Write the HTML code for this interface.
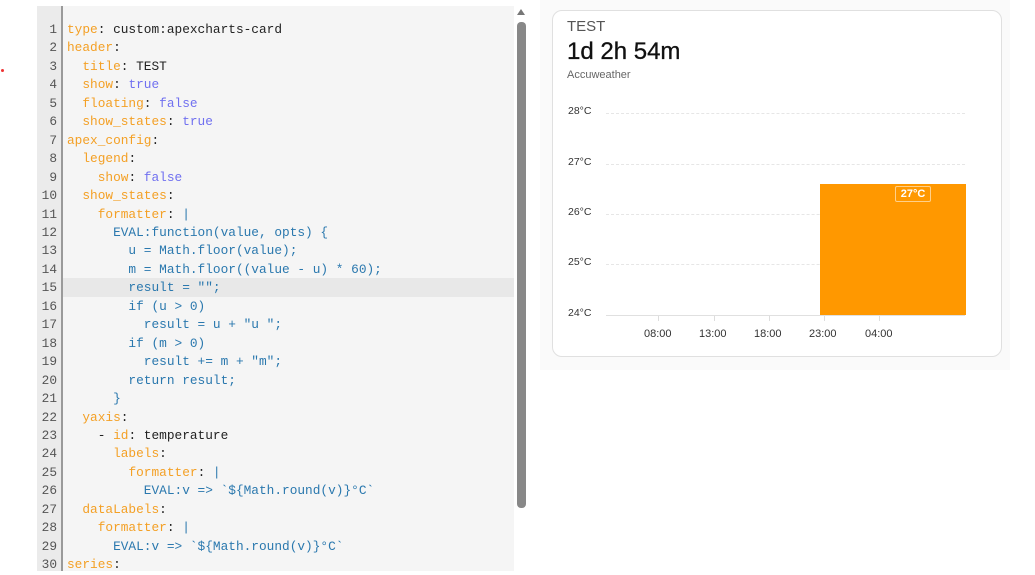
<!DOCTYPE html><html><head><style>
body{margin:0;width:1035px;height:571px;background:#fff;position:relative;overflow:hidden;font-family:"Liberation Sans",sans-serif}
.ed{position:absolute;left:37px;top:6px;width:477px;height:565px;background:#f5f5f5}
.gut{position:absolute;left:37px;top:6px;width:24px;height:565px;background:#ebebeb;border-right:2px solid #9a9a9a}
.hl{position:absolute;left:63px;top:278px;width:451px;height:19px;background:#e8e8e8}
.code{position:absolute;left:37px;top:21px;font-family:"Liberation Mono",monospace;font-size:12.8px;line-height:18.45px;white-space:pre;color:#222}
.ln{display:inline-block;width:20px;text-align:right;color:#555;margin-right:10px}
.k{color:#f4a025}.b{color:#7070f0}.s{color:#2a78ae}
.sb{position:absolute;left:517px;top:22px;width:9px;height:486px;background:#888;border-radius:4px}
.arr{position:absolute;left:517px;top:9px;width:0;height:0;border-left:4px solid transparent;border-right:4px solid transparent;border-bottom:6px solid #777}
.rbg{position:absolute;left:540px;top:0;width:470px;height:370px;background:#fafafa}
.card{position:absolute;left:552px;top:10px;width:450px;height:347px;background:#fff;border:1px solid #e0e0e0;border-radius:10px;box-sizing:border-box}
.t{position:absolute;font-size:12px;color:#333}
.g{position:absolute;left:606px;width:359px;border-top:1px dashed #e6e6e6}
.tk{position:absolute;top:316px;width:1px;height:5px;background:#ddd}
</style></head><body>
<div class="ed"></div><div class="gut"></div><div class="hl"></div>
<div class="code"><span class="ln">1</span><span class="k">type</span>: custom:apexcharts-card
<span class="ln">2</span><span class="k">header</span>:
<span class="ln">3</span>  <span class="k">title</span>: TEST
<span class="ln">4</span>  <span class="k">show</span>: <span class="b">true</span>
<span class="ln">5</span>  <span class="k">floating</span>: <span class="b">false</span>
<span class="ln">6</span>  <span class="k">show_states</span>: <span class="b">true</span>
<span class="ln">7</span><span class="k">apex_config</span>:
<span class="ln">8</span>  <span class="k">legend</span>:
<span class="ln">9</span>    <span class="k">show</span>: <span class="b">false</span>
<span class="ln">10</span>  <span class="k">show_states</span>:
<span class="ln">11</span>    <span class="k">formatter</span>: <span class="s">|</span>
<span class="ln">12</span><span class="s">      EVAL:function(value, opts) {</span>
<span class="ln">13</span><span class="s">        u = Math.floor(value);</span>
<span class="ln">14</span><span class="s">        m = Math.floor((value - u) * 60);</span>
<span class="ln">15</span><span class="s">        result = "";</span>
<span class="ln">16</span><span class="s">        if (u > 0)</span>
<span class="ln">17</span><span class="s">          result = u + "u ";</span>
<span class="ln">18</span><span class="s">        if (m > 0)</span>
<span class="ln">19</span><span class="s">          result += m + "m";</span>
<span class="ln">20</span><span class="s">        return result;</span>
<span class="ln">21</span><span class="s">      }</span>
<span class="ln">22</span>  <span class="k">yaxis</span>:
<span class="ln">23</span>    - <span class="k">id</span>: temperature
<span class="ln">24</span>      <span class="k">labels</span>:
<span class="ln">25</span>        <span class="k">formatter</span>: <span class="s">|</span>
<span class="ln">26</span><span class="s">          EVAL:v => `${Math.round(v)}°C`</span>
<span class="ln">27</span>  <span class="k">dataLabels</span>:
<span class="ln">28</span>    <span class="k">formatter</span>: <span class="s">|</span>
<span class="ln">29</span><span class="s">      EVAL:v => `${Math.round(v)}°C`</span>
<span class="ln">30</span><span class="k">series</span>:</div>
<div class="arr"></div><div class="sb"></div>
<div style="position:absolute;left:1px;top:69px;width:3px;height:3px;background:#e33;border-radius:50%"></div>
<div class="rbg"></div>
<div class="card"></div>
<div class="t" style="left:567px;top:18px;font-size:15px;color:#555">TEST</div>
<div class="t" style="left:567px;top:38px;font-size:24px;color:#111;-webkit-text-stroke:0.3px #111">1d 2h 54m</div>
<div class="t" style="left:567px;top:69px;font-size:11px;color:#666">Accuweather</div>
<div class="g" style="top:113px"></div><div class="g" style="top:164px"></div><div class="g" style="top:214px"></div><div class="g" style="top:264px"></div><div class="g" style="top:315px;border-top-style:solid;border-color:#e0e0e0"></div>
<div class="tk" style="left:658px"></div><div class="tk" style="left:714px"></div><div class="tk" style="left:769px"></div><div class="tk" style="left:824px"></div><div class="tk" style="left:879px"></div>
<div class="t" style="left:568px;top:105px;font-size:10.5px">28°C</div>
<div class="t" style="left:568px;top:156px;font-size:10.5px">27°C</div>
<div class="t" style="left:568px;top:206px;font-size:10.5px">26°C</div>
<div class="t" style="left:568px;top:256px;font-size:10.5px">25°C</div>
<div class="t" style="left:568px;top:307px;font-size:10.5px">24°C</div>
<div style="position:absolute;left:820px;top:184px;width:146px;height:131px;background:#ff9800"></div>
<div style="position:absolute;left:895px;top:186px;width:34px;height:14px;border:1px solid #ffd08a;border-radius:2px;color:#fff;font-size:11px;font-weight:bold;text-align:center;line-height:14px">27°C</div>
<div class="t" style="left:644px;top:328px;font-size:11px">08:00</div>
<div class="t" style="left:699px;top:328px;font-size:11px">13:00</div>
<div class="t" style="left:754px;top:328px;font-size:11px">18:00</div>
<div class="t" style="left:809px;top:328px;font-size:11px">23:00</div>
<div class="t" style="left:865px;top:328px;font-size:11px">04:00</div>
</body></html>
